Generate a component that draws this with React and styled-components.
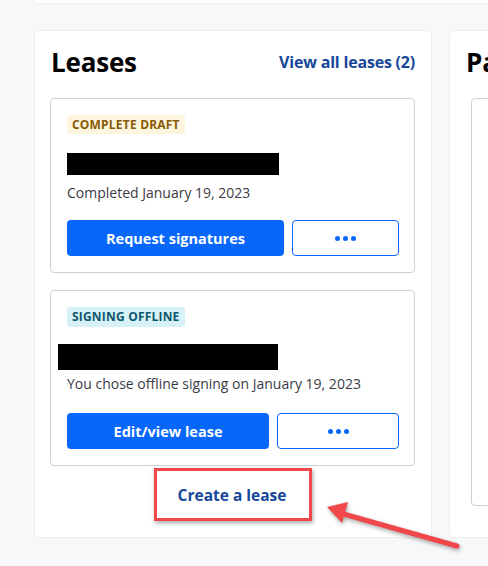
import React from 'react';
import styled, { createGlobalStyle } from 'styled-components';

const GlobalStyle = createGlobalStyle`
    html, body {
        margin: 0;
        padding: 0;
        overflow: hidden;
        background: #f7f8fa;
        font-family: "Open Sans", "Noto Sans", Arial, sans-serif;
    }
`;

const Page = styled.div`
    position: relative;
    width: 488px;
    height: 566px;
    padding-left: 34px;
    box-sizing: border-box;
    overflow: hidden;
`;

const TopPanel = styled.div`
    height: 3px;
    width: 600px;
    background: #fff;
    border: 1px solid #eceef1;
    border-top: none;
    border-radius: 0 0 0 4px;
`;

const Columns = styled.div`
    display: flex;
    gap: 17px;
    margin-top: 26px;
`;

const Panel = styled.section`
    flex: none;
    width: 398px;
    height: 508px;
    box-sizing: border-box;
    background: #fff;
    border: 1px solid #eceef1;
    border-radius: 4px;
    padding: 12px 16px 0 15px;
    display: flex;
    flex-direction: column;
`;

const PanelHeader = styled.div`
    display: flex;
    align-items: center;
    justify-content: space-between;
    height: 38px;
    padding-left: 1px;
    margin-bottom: 17px;
`;

const Title = styled.h2`
    margin: 0;
    font-size: 26px;
    font-weight: 700;
    color: #000;
    letter-spacing: -0.2px;
    white-space: nowrap;
`;

const HeaderLink = styled.a`
    font-size: 16px;
    font-weight: 700;
    color: #17479a;
    text-decoration: none;
    letter-spacing: -0.2px;
`;

const CardList = styled.div`
    display: flex;
    flex-direction: column;
    gap: 17px;
`;

const Card = styled.div`
    border: 1px solid #cfd1d4;
    border-radius: 4px;
    padding: 16px;
    display: flex;
    flex-direction: column;
    align-items: flex-start;
`;

const Badge = styled.span`
    display: inline-block;
    height: ${(p) => p.$h}px;
    line-height: ${(p) => p.$h}px;
    padding: 0 5px;
    border-radius: 3px;
    font-size: 12px;
    font-weight: 700;
    letter-spacing: 0.2px;
    text-transform: uppercase;
    background: ${(p) => p.$bg};
    color: ${(p) => p.$fg};
`;

const Redaction = styled.div`
    width: ${(p) => p.$w}px;
    height: ${(p) => p.$h}px;
    margin-top: ${(p) => p.$top}px;
    margin-left: ${(p) => p.$left}px;
    background: #000;
`;

const Meta = styled.p`
    margin: ${(p) => p.$top}px 0 0;
    line-height: 20px;
    font-size: 14px;
    color: #3b3b45;
`;

const Actions = styled.div`
    display: grid;
    grid-template-columns: ${(p) => p.$cols};
    gap: 8px;
    width: 100%;
    margin-top: ${(p) => p.$top}px;
`;

const PrimaryButton = styled.button`
    height: 36px;
    border: none;
    border-radius: 4px;
    background: #0767fd;
    color: #fff;
    font-family: inherit;
    font-size: 14.5px;
    font-weight: 700;
    cursor: pointer;
`;

const MoreButton = styled.button`
    height: 36px;
    border: 1px solid #0767fd;
    border-radius: 4px;
    background: #fff;
    display: flex;
    align-items: center;
    justify-content: center;
    gap: 3px;
    cursor: pointer;
`;

const Dot = styled.span`
    width: 5px;
    height: 5px;
    border-radius: 50%;
    background: #0767fd;
`;

const Highlight = styled.div`
    align-self: center;
    margin-top: 2px;
    margin-left: 1px;
    width: 158px;
    height: 53px;
    box-sizing: border-box;
    border: 3px solid #f0474b;
    box-shadow: 1px 2px 4px rgba(0, 0, 0, 0.35);
    display: flex;
    align-items: center;
    justify-content: center;
`;

const CreateLink = styled.a`
    font-size: 15.5px;
    font-weight: 700;
    color: #17479a;
    text-decoration: none;
    margin-left: -2px;
`;

const EmptyCard = styled.div`
    margin-left: 6px;
    width: 400px;
    height: 406px;
    border: 1px solid #cfd1d4;
    border-radius: 4px;
`;

const Arrow = styled.svg`
    position: absolute;
    left: 318px;
    top: 496px;
    overflow: visible;
    filter: drop-shadow(1px 2px 2px rgba(0, 0, 0, 0.35));
`;

function MoreMenu() {
    return (
        <MoreButton aria-label="More actions">
            <Dot />
            <Dot />
            <Dot />
        </MoreButton>
    );
}

export default function App() {
    return (
        <Page>
            <GlobalStyle />
            <TopPanel />
            <Columns>
                <Panel>
                    <PanelHeader>
                        <Title>Leases</Title>
                        <HeaderLink href="#">View all leases (2)</HeaderLink>
                    </PanelHeader>
                    <CardList>
                        <Card>
                            <Badge $bg="#fdf5dd" $fg="#875a06" $h={19}>Complete draft</Badge>
                            <Redaction $w={212} $h={22} $top={19} $left={0} />
                            <Meta $top={8}>Completed January 19, 2023</Meta>
                            <Actions $cols="217px 107px" $top={17}>
                                <PrimaryButton>Request signatures</PrimaryButton>
                                <MoreMenu />
                            </Actions>
                        </Card>
                        <Card>
                            <Badge $bg="#d6f2f8" $fg="#0e566c" $h={20}>Signing offline</Badge>
                            <Redaction $w={220} $h={26} $top={17} $left={-9} />
                            <Meta $top={4}>You chose offline signing on January 19, 2023</Meta>
                            <Actions $cols="202px 122px" $top={19}>
                                <PrimaryButton>Edit/view lease</PrimaryButton>
                                <MoreMenu />
                            </Actions>
                        </Card>
                    </CardList>
                    <Highlight>
                        <CreateLink href="#">Create a lease</CreateLink>
                    </Highlight>
                </Panel>
                <Panel>
                    <PanelHeader>
                        <Title>Pa</Title>
                    </PanelHeader>
                    <EmptyCard />
                </Panel>
            </Columns>
            <Arrow width="150" height="60" viewBox="0 0 150 60">
                <line x1="139" y1="50" x2="22" y2="17" stroke="#f0474b" strokeWidth="5" strokeLinecap="round" />
                <polygon points="9,11 30,6 24,27" fill="#f0474b" />
            </Arrow>
        </Page>
    );
}
